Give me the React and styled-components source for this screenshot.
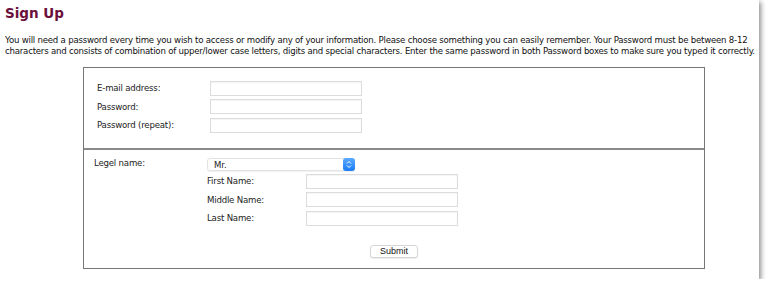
import styled, { createGlobalStyle } from 'styled-components';

const GlobalStyle = createGlobalStyle`
  body {
    margin: 0;
    background-color: #ffffff;
    font-family: "DejaVu Sans", Verdana, sans-serif;
  }
`;

const Page = styled.div`
  width: 759px;
  height: 279px;
  box-sizing: border-box;
  background-color: #ffffff;
  box-shadow: 2px 2px 5px rgba(0, 0, 0, 0.45);
  padding: 3px 0 0 5px;
  overflow: hidden;
`;

const Title = styled.h1`
  margin: 0;
  font-size: 13.5px;
  line-height: 20px;
  font-weight: bold;
  color: #6b0f3b;
`;

const Intro = styled.p`
  margin: 12px 0 0;
  font-size: 8.6px;
  letter-spacing: -0.22px;
  line-height: 11px;
  color: #111;
  white-space: nowrap;
`;

const FormBox = styled.form`
  margin: 10px 0 0 78px;
  width: 622px;
  height: 202px;
  box-sizing: border-box;
  border: 1px solid #777;
  display: flex;
  flex-direction: column;
`;

const Section = styled.div`
  padding: ${(p) => p.$pad};
  border-top: ${(p) => (p.$divided ? '2px solid #8a8a8a' : 'none')};
  height: ${(p) => p.$height || 'auto'};
  box-sizing: border-box;
`;

const Row = styled.div`
  display: grid;
  grid-template-columns: ${(p) => p.$cols};
  align-items: center;
  height: 18.5px;
`;

const Label = styled.label`
  font-size: 8.6px;
  letter-spacing: -0.2px;
  color: #222;
`;

const TextInput = styled.input`
  width: 152px;
  height: 15px;
  box-sizing: border-box;
  border: 1px solid #dcdcdc;
  box-shadow: inset 0 1px 1px rgba(0, 0, 0, 0.04);
  padding: 0 3px;
  font-size: 9px;
  outline: none;
`;

const NameGrid = styled.div`
  display: grid;
  grid-template-columns: 113px 1fr;
`;

const SelectBox = styled.div`
  width: 148px;
  height: 13px;
  box-sizing: border-box;
  border: 1px solid #e2e2e2;
  border-radius: 3px;
  display: flex;
  align-items: center;
  justify-content: space-between;
  font-size: 8.5px;
  color: #222;
  padding-left: 6px;
  margin-bottom: 1px;
  box-shadow: 0 1px 1px rgba(0, 0, 0, 0.06);
`;

const Stepper = styled.span`
  width: 12px;
  height: 13px;
  margin-right: -1px;
  border-radius: 3px;
  background: linear-gradient(#5ba9ff, #1a7cf5);
  display: flex;
  align-items: center;
  justify-content: center;
`;

const Actions = styled.div`
  display: flex;
  padding: 17px 0 0 276px;
`;

const SubmitButton = styled.button`
  width: 48px;
  height: 13px;
  box-sizing: border-box;
  border: 1px solid #d6d6d6;
  border-radius: 3px;
  background: #fff;
  font-family: "Liberation Sans", Arial, sans-serif;
  font-size: 9px;
  line-height: 11px;
  color: #111;
  padding: 0;
  box-shadow: 0 1px 1px rgba(0, 0, 0, 0.08);
`;

const App = () => {
  return (
    <>
      <GlobalStyle />
      <Page>
        <Title>Sign Up</Title>
        <Intro>
          You will need a password every time you wish to access or modify any of your information. Please choose
          something you can easily remember. Your Password must be between 8-12
          <br />
          characters and consists of combination of upper/lower case letters, digits and special characters. Enter
          the same password in both Password boxes to make sure you typed it correctly.
        </Intro>
        <FormBox onSubmit={(e) => e.preventDefault()}>
          <Section $pad="11px 0 0 13px" $height="80px">
            <Row $cols="113px 1fr">
              <Label>E-mail address:</Label>
              <TextInput type="text" />
            </Row>
            <Row $cols="113px 1fr">
              <Label>Password:</Label>
              <TextInput type="password" />
            </Row>
            <Row $cols="113px 1fr">
              <Label>Password (repeat):</Label>
              <TextInput type="password" />
            </Row>
          </Section>
          <Section $divided $pad="8px 0 0 10px">
            <NameGrid>
              <Label>Legel name:</Label>
              <div>
                <SelectBox>
                  Mr.
                  <Stepper>
                    <svg width="6" height="9" viewBox="0 0 6 9">
                      <path d="M1 3.5 L3 1.5 L5 3.5 M1 5.5 L3 7.5 L5 5.5" fill="none" stroke="#fff" strokeWidth="1" />
                    </svg>
                  </Stepper>
                </SelectBox>
                <Row $cols="99px 1fr">
                  <Label>First Name:</Label>
                  <TextInput type="text" />
                </Row>
                <Row $cols="99px 1fr">
                  <Label>Middle Name:</Label>
                  <TextInput type="text" />
                </Row>
                <Row $cols="99px 1fr">
                  <Label>Last Name:</Label>
                  <TextInput type="text" />
                </Row>
              </div>
            </NameGrid>
            <Actions>
              <SubmitButton type="submit">Submit</SubmitButton>
            </Actions>
          </Section>
        </FormBox>
      </Page>
    </>
  );
};

export default App;
